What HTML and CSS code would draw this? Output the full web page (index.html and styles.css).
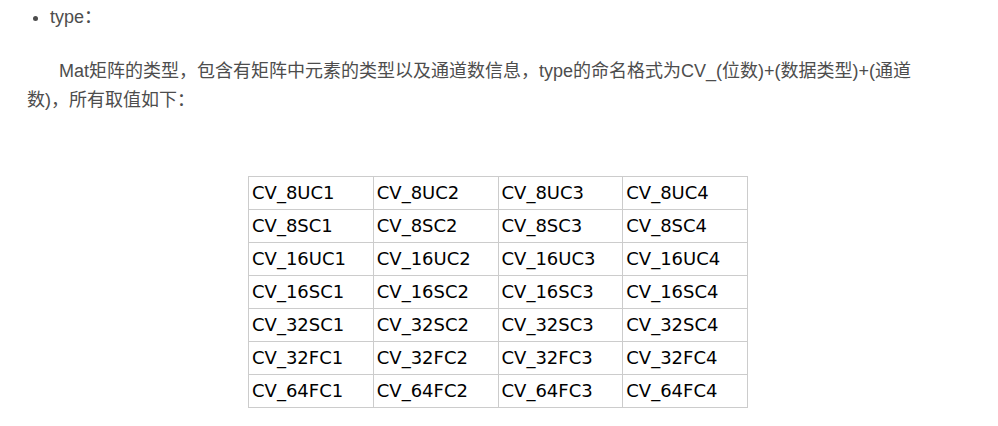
FILE: index.html
```html
<!DOCTYPE html>
<html lang="zh-CN">
<head>
<meta charset="utf-8">
<link rel="stylesheet" href="styles.css">
</head>
<body>
<div class="article">
  <ul class="list">
    <li>type：</li>
  </ul>
  <p class="para">Mat矩阵的类型，包含有矩阵中元素的类型以及通道数信息，type的命名格式为CV_(位数)+(数据类型)+(通道数)，所有取值如下：</p>
  <table class="types">
    <tr><td>CV_8UC1</td><td>CV_8UC2</td><td>CV_8UC3</td><td>CV_8UC4</td></tr>
    <tr><td>CV_8SC1</td><td>CV_8SC2</td><td>CV_8SC3</td><td>CV_8SC4</td></tr>
    <tr><td>CV_16UC1</td><td>CV_16UC2</td><td>CV_16UC3</td><td>CV_16UC4</td></tr>
    <tr><td>CV_16SC1</td><td>CV_16SC2</td><td>CV_16SC3</td><td>CV_16SC4</td></tr>
    <tr><td>CV_32SC1</td><td>CV_32SC2</td><td>CV_32SC3</td><td>CV_32SC4</td></tr>
    <tr><td>CV_32FC1</td><td>CV_32FC2</td><td>CV_32FC3</td><td>CV_32FC4</td></tr>
    <tr><td>CV_64FC1</td><td>CV_64FC2</td><td>CV_64FC3</td><td>CV_64FC4</td></tr>
  </table>
</div>
</body>
</html>
```

FILE: styles.css
```css
html, body {
  margin: 0;
  padding: 0;
  background: #ffffff;
}
.article {
  width: 996px;
  font-family: "Liberation Sans", "Noto Sans CJK SC", sans-serif;
  font-size: 18px;
  line-height: 29px;
  color: #4d4d4d;
}
.list {
  margin: 0;
  padding: 3px 0 0 50px;
  list-style: disc;
}
.list li {
  margin: 0;
}
.para {
  margin: 25px 0 0 27px;
  width: 888px;
  text-indent: 32px;
}
.types {
  margin: 61px auto 0;
  border-collapse: collapse;
  table-layout: fixed;
  width: 500px;
  font-family: "DejaVu Sans", Verdana, sans-serif;
  font-size: 18px;
  line-height: 22px;
  color: #000000;
}
.types td {
  border: 1px solid #cccccc;
  padding: 5px 3px;
  white-space: nowrap;
}
```
